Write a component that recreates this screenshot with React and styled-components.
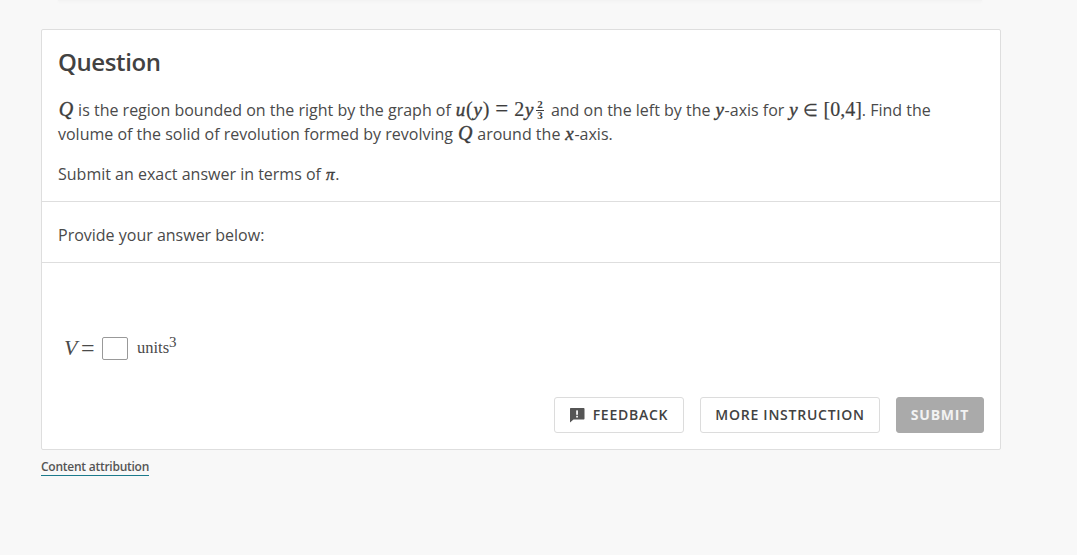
import React from 'react';
import styled, { createGlobalStyle } from 'styled-components';

const Global = createGlobalStyle`
  html, body { margin: 0; padding: 0; background: #f8f8f8; }
  body { font-family: "Open Sans", sans-serif; color: #4a4a4a; }
`;

const Page = styled.div`
  width: 1077px;
  height: 555px;
  overflow: hidden;
  padding-left: 41px;
  box-sizing: border-box;
`;

const TopStrip = styled.div`
  width: 924px;
  height: 1px;
  margin-left: 17px;
  margin-bottom: 28px;
  background: #f3f3f3;
  box-shadow: 0 1px 3px rgba(0, 0, 0, 0.05);
`;

const Card = styled.div`
  width: 960px;
  height: 421px;
  box-sizing: border-box;
  background: #fff;
  border: 1px solid #dedede;
  border-radius: 2px;
  display: flex;
  flex-direction: column;
`;

const Section = styled.div`
  padding: ${(p) => p.$pad || '16px'};
  border-bottom: 1px solid #dedede;
`;

const Title = styled.h2`
  margin: 0 0 20px;
  font-size: 24px;
  line-height: 32px;
  font-weight: 600;
  letter-spacing: -0.4px;
  color: #424242;
`;

const Para = styled.p`
  margin: 0 0 ${(p) => p.$mb || 0}px;
  font-size: 16px;
  line-height: 24px;
  color: #4a4a4a;
`;

// math italics, stroked a little to get near the weight of computer modern
const Mi = styled.span`
  font-family: "Liberation Serif", serif;
  font-style: italic;
  font-size: ${(p) => p.$size || 19}px;
  line-height: 0;
  margin: 0 0.75px;
  color: #3d3d3d;
  -webkit-text-stroke: 0.4px #3d3d3d;
`;

const Mo = styled.span`
  font-family: "Liberation Serif", serif;
  font-size: ${(p) => p.$size || 20}px;
  line-height: 0;
  color: #3d3d3d;
  -webkit-text-stroke: 0.2px #3d3d3d;
  margin: 0 ${(p) => p.$gap || 0}px;
`;

const Frac = styled.span`
  display: inline-flex;
  flex-direction: column;
  align-items: center;
  vertical-align: 8px;
  font-family: "Liberation Serif", serif;
  font-weight: 700;
  font-size: 11px;
  line-height: 9px;
  margin: 0 3px 0 2px;
  color: #3d3d3d;

  & > span:first-child {
    border-bottom: 1px solid #3d3d3d;
    padding: 0 1px 1px;
  }
`;

const Answer = styled.div`
  flex: 1;
  display: flex;
  flex-direction: column;
  padding: 0 16px 16px;
`;

const Formula = styled.div`
  display: flex;
  align-items: center;
  margin: 72px 0 0 6px;
  height: 26px;
  font-family: "Liberation Serif", serif;
  font-size: 20px;
  color: #4a4a4a;
`;

const Var = styled.span`
  font-style: italic;
  font-size: 22px;
  width: 17px;
`;

const Equals = styled.span`
  font-size: 24px;
  width: 21px;
`;

const Box = styled.span`
  width: 26px;
  height: 23px;
  box-sizing: border-box;
  border: 1px solid #999;
  border-radius: 2px;
  background: #fff;
`;

const Units = styled.span`
  font-size: 16.5px;
  margin-left: 9px;
  & sup { font-size: 15px; line-height: 0; vertical-align: 6px; }
`;

const Actions = styled.div`
  margin-top: auto;
  display: flex;
  justify-content: flex-end;
  gap: 16px;
`;

const Button = styled.button`
  height: 36px;
  box-sizing: border-box;
  padding: 0 ${(p) => p.$right || 14}px 1px 14px;
  display: inline-flex;
  align-items: center;
  gap: 8px;
  font-family: "Open Sans", sans-serif;
  font-size: 14px;
  font-weight: ${(p) => (p.$solid ? 700 : 600)};
  letter-spacing: 0.75px;
  border-radius: 3px;
  border: 1px solid ${(p) => (p.$solid ? '#aaa' : '#dcdcdc')};
  background: ${(p) => (p.$solid ? '#aaa' : '#fff')};
  color: ${(p) => (p.$solid ? '#f2f2f2' : '#424242')};
`;

const Attribution = styled.a`
  display: inline-block;
  margin-top: 9px;
  font-size: 12px;
  line-height: 16px;
  font-weight: 600;
  letter-spacing: -0.25px;
  color: #555;
  border-bottom: 1px solid #1b7a8c;
`;

const FeedbackIcon = () => (
  <svg width="16" height="16" viewBox="0 0 16 16">
    <path
      fill="#555"
      d="M1.5 1h13c.6 0 1 .4 1 1v9.5c0 .6-.4 1-1 1H4.5L1 15.5V2c0-.6.2-1 .5-1z"
    />
    <rect x="7.2" y="3.4" width="1.7" height="4.4" fill="#fff" />
    <rect x="7.2" y="8.8" width="1.7" height="1.7" fill="#fff" />
  </svg>
);

export default function App() {
  return (
    <Page>
      <Global />
      <TopStrip />
      <Card>
        <Section $pad="16px 16px 15px">
          <Title>Question</Title>
          <Para $mb={16}>
            <Mi $size={20}>Q</Mi> is the region bounded on the right by the graph of <Mi>u</Mi><Mo>(</Mo><Mi>y</Mi><Mo>)</Mo><Mo $size={23} $gap={6}>=</Mo><Mo>2</Mo><Mi>y</Mi>
            <Frac><span>2</span><span>3</span></Frac> and on the left by the <Mi>y</Mi>-axis for <Mi>y</Mi><Mo $size={17} $gap={5}>∈</Mo><Mo>[0,4]</Mo>. Find the volume of the solid of revolution formed by revolving <Mi $size={20}>Q</Mi> around the <Mi>x</Mi>-axis.
          </Para>
          <Para>Submit an exact answer in terms of <Mi $size={17}>π</Mi>.</Para>
        </Section>
        <Section $pad="21px 16px 15px">
          <Para>Provide your answer below:</Para>
        </Section>
        <Answer>
          <Formula>
            <Var>V</Var>
            <Equals>=</Equals>
            <Box />
            <Units>units<sup>3</sup></Units>
          </Formula>
          <Actions>
            <Button $right={15}><FeedbackIcon />FEEDBACK</Button>
            <Button>MORE INSTRUCTION</Button>
            <Button $solid>SUBMIT</Button>
          </Actions>
        </Answer>
      </Card>
      <Attribution>Content attribution</Attribution>
    </Page>
  );
}
